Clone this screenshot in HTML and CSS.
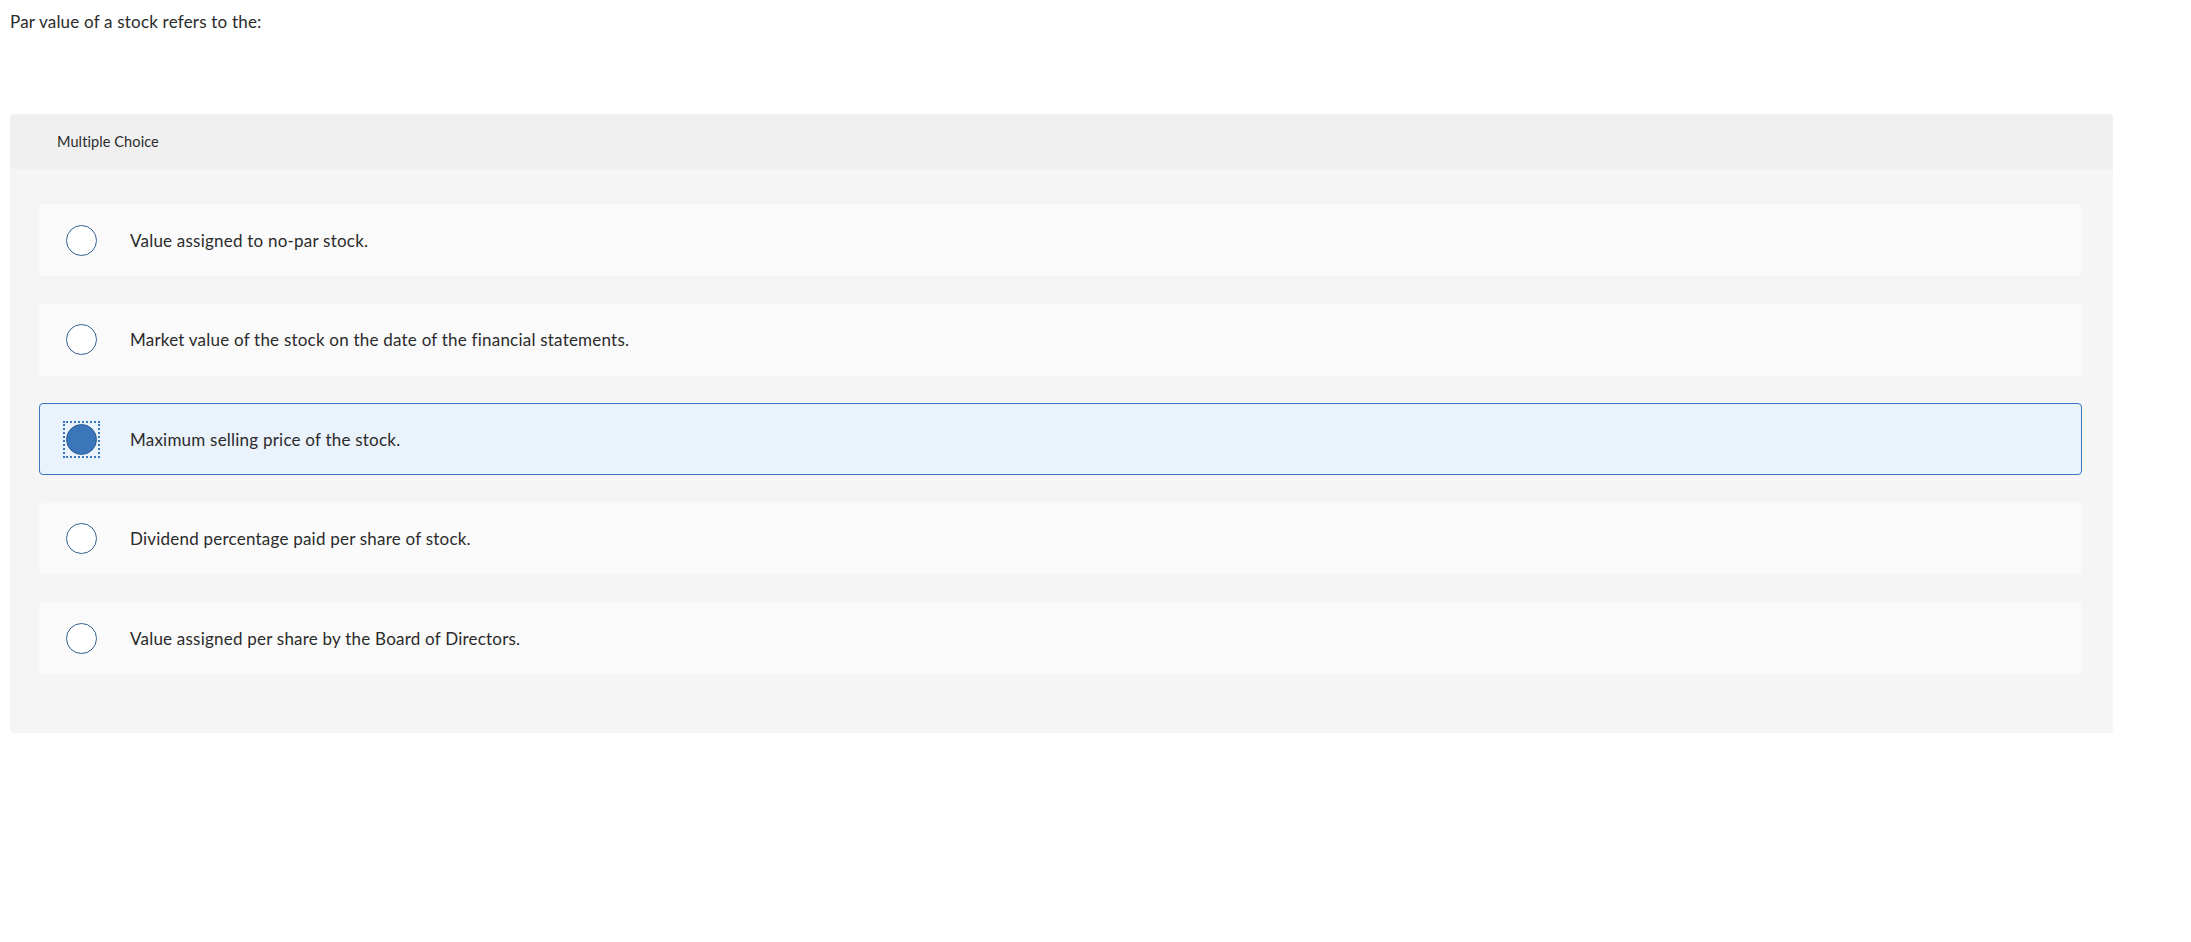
FILE: index.html
```html
<!DOCTYPE html>
<html>
<head>
<meta charset="utf-8">
<link rel="stylesheet" href="styles.css">
</head>
<body>
<div class="prompt">Par value of a stock refers to the:</div>
<div class="card">
  <div class="card-head">Multiple Choice</div>
  <div class="card-body">
    <div class="option"><span class="radio-wrap"><span class="radio"></span></span><span class="label">Value assigned to no-par stock.</span></div>
    <div class="option"><span class="radio-wrap"><span class="radio"></span></span><span class="label">Market value of the stock on the date of the financial statements.</span></div>
    <div class="option selected"><span class="radio-wrap"><span class="radio"></span></span><span class="label">Maximum selling price of the stock.</span></div>
    <div class="option"><span class="radio-wrap"><span class="radio"></span></span><span class="label">Dividend percentage paid per share of stock.</span></div>
    <div class="option"><span class="radio-wrap"><span class="radio"></span></span><span class="label">Value assigned per share by the Board of Directors.</span></div>
  </div>
</div>
</body>
</html>
```
FILE: styles.css
```css
html, body {
  margin: 0;
  padding: 0;
  background: #ffffff;
}
body {
  font-family: Lato, "Liberation Sans", sans-serif;
  color: #2b2b2b;
  padding: 0 0 0 10px;
}
.prompt {
  font-size: 17px;
  line-height: 20px;
  letter-spacing: 0.2px;
  padding-top: 12px;
  height: 114px;
  box-sizing: border-box;
}
.card {
  width: 2103px;
  border-radius: 4px;
  overflow: hidden;
  background: #f5f5f5;
}
.card-head {
  height: 55px;
  background: #f0f0f0;
  display: flex;
  align-items: center;
  padding-left: 47px;
  font-size: 14.5px;
  letter-spacing: 0.1px;
  color: #2b2b2b;
}
.card-body {
  padding: 35px 31px 59px 29px;
  display: flex;
  flex-direction: column;
  gap: 27.5px;
}
.option {
  height: 72px;
  box-sizing: border-box;
  background: #fafafa;
  border-radius: 4px;
  display: flex;
  align-items: center;
  padding-left: 23px;
  border: 1px solid transparent;
}
.radio-wrap {
  width: 37px;
  height: 37px;
  box-sizing: border-box;
  display: flex;
  align-items: center;
  justify-content: center;
  flex: none;
}
.radio {
  width: 31px;
  height: 31px;
  box-sizing: border-box;
  border-radius: 50%;
  border: 1.5px solid #35618f;
  background: #ffffff;
}
.option .label {
  margin-left: 30px;
  font-size: 17px;
  letter-spacing: 0.22px;
}
.option.selected {
  background: #eaf2fb;
  border-color: #3a77bf;
}
.option.selected .radio-wrap {
  border: 2px dotted #3a77bf;
}
.option.selected .radio {
  background: #3a76b9;
  border-color: #2f5f98;
}
```
